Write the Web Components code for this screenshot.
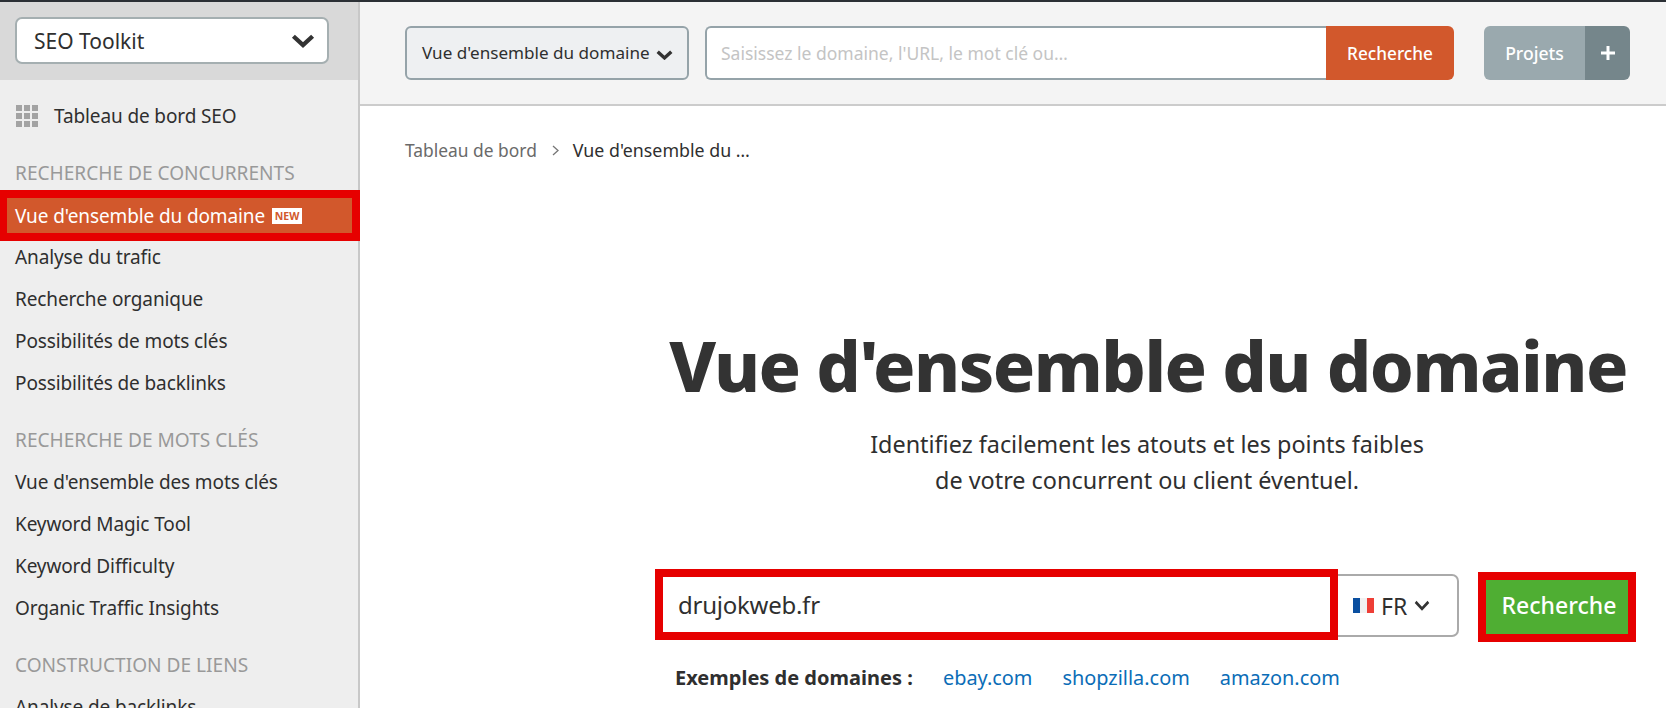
<!DOCTYPE html>
<html lang="fr"><head><meta charset="utf-8"><title>SEO Toolkit</title>
<style>
html,body{margin:0;padding:0;height:708px;overflow:hidden;background:#fff}
body{font-family:"Noto Sans","Open Sans",sans-serif;color:#2f2f2f}
</style></head><body>
<app-shell>
  <seo-sidebar slot="side"></seo-sidebar>
  <top-toolbar slot="top"></top-toolbar>
  <bread-crumbs slot="main"></bread-crumbs>
  <domain-hero slot="main"></domain-hero>
</app-shell>
<script>
const chevron=(w,h,sw,c='#333',mt=0)=>`<svg width="${w}" height="${h}" viewBox="0 0 20 12" preserveAspectRatio="none" style="display:block;flex:none;margin-top:${mt}px"><path d="M2 2 L10 9.5 L18 2" fill="none" stroke="${c}" stroke-width="${sw}"/></svg>`;
function def(name,html){customElements.define(name,class extends HTMLElement{constructor(){super();this.attachShadow({mode:'open'}).innerHTML=html;}})}

def('app-shell',`<style>
:host{display:grid;grid-template-columns:360px 1fr;height:708px;border-top:2px solid #2b3035;box-sizing:border-box;overflow:hidden}
.side{display:block;min-width:0;height:706px;overflow:hidden}
.right{display:flex;flex-direction:column;min-width:0}
</style><div class="side"><slot name="side"></slot></div><div class="right"><slot name="top"></slot><slot name="main"></slot></div>`);

def('seo-sidebar',`<style>
:host{display:block;height:706px;background:#eeeeee;box-sizing:border-box;box-shadow:inset -2px 0 0 #c8c8c8;overflow:hidden}
.head{background:#d9d9d9;height:78px;margin-right:2px;box-sizing:border-box;padding:15px 29px 0 15px}
.sel{height:47px;box-sizing:border-box;background:#fff;border:2px solid #a5afb1;border-radius:7px;display:flex;align-items:center;justify-content:space-between;padding:0 12px 0 17px;font-size:21px;color:#2f2f2f}
.dash{display:flex;align-items:center;height:22px;margin:25px 0 0 16px;gap:16px;font-size:19px;letter-spacing:-.12px}
.grid{display:grid;grid-template-columns:repeat(3,6px);grid-auto-rows:6px;gap:2px;flex:none}
.grid i{background:#a3a3a3}
</style>
<div class="head"><div class="sel"><span>SEO Toolkit</span>${chevron(24,14,3.6)}</div></div>
<div class="dash"><div class="grid"><i></i><i></i><i></i><i></i><i></i><i></i><i></i><i></i><i></i></div><span>Tableau de bord SEO</span></div>
<nav-label style="margin-top:34px">RECHERCHE DE CONCURRENTS</nav-label>
<nav-item active>Vue d'ensemble du domaine<new-badge></new-badge></nav-item>
<nav-item>Analyse du trafic</nav-item>
<nav-item>Recherche organique</nav-item>
<nav-item>Possibilités de mots clés</nav-item>
<nav-item>Possibilités de backlinks</nav-item>
<nav-label style="margin-top:24px">RECHERCHE DE MOTS CLÉS</nav-label>
<nav-item first>Vue d'ensemble des mots clés</nav-item>
<nav-item>Keyword Magic Tool</nav-item>
<nav-item>Keyword Difficulty</nav-item>
<nav-item>Organic Traffic Insights</nav-item>
<nav-label style="margin-top:24px">CONSTRUCTION DE LIENS</nav-label>
<nav-item first>Analyse de backlinks</nav-item>`);

def('nav-label',`<style>:host{display:block;height:24px;line-height:24px;padding-left:15px;font-size:19.1px;color:#999;white-space:nowrap}</style><slot></slot>`);

def('nav-item',`<style>
:host{display:flex;align-items:center;height:42px;box-sizing:border-box;padding-left:15px;font-size:19px;letter-spacing:-.12px;color:#2f2f2f;white-space:nowrap}
:host([active]){height:51px;margin-top:5px;margin-bottom:-5px;padding-left:8px;background:#d2582c;border:solid #e60000;border-width:8px 8px 8px 7px;color:#fff}
:host([first]){margin-top:9px}
</style><slot></slot>`);

def('new-badge',`<style>:host{display:inline-block;margin-left:7px;background:#fff;color:#d2582c;font:700 10.5px/16px "Noto Sans",sans-serif;letter-spacing:0;width:30px;text-align:center;height:16px}</style>NEW`);

def('top-toolbar',`<style>
:host{display:flex;align-items:center;height:102px;box-sizing:content-box;background:#f4f4f4;border-bottom:2px solid #cccccc;padding:0 0 0 45px}
.bar{display:flex;height:54px}
.type{width:284px;box-sizing:border-box;background:#eef0f2;border:2px solid #95a3a9;border-radius:6px;display:flex;align-items:center;padding-left:15px;gap:6px;font-size:17.1px;white-space:nowrap;color:#2f2f2f}
.type span{position:relative;top:-1px}
.input{margin-left:16px;width:621px;box-sizing:border-box;background:#fff;border:2px solid #95a3a9;border-right:0;border-radius:6px 0 0 6px;display:flex;align-items:center;padding-left:14px;font-size:17.5px;color:#c4c4c4;white-space:nowrap}
.go{width:128px;background:#d2582c;color:#fff;border-radius:0 6px 6px 0;display:flex;align-items:center;justify-content:center;font-size:17.2px;font-weight:500}
.proj{margin-left:30px;display:flex;border-radius:6px;overflow:hidden;color:#fff;font-size:17.6px;font-weight:500}
.proj span{width:101px;background:#9aa9ae;display:flex;align-items:center;justify-content:center}
.proj b{width:45px;background:#75868b;display:flex;align-items:center;justify-content:center}
</style>
<div class="bar"><div class="type"><span>Vue d'ensemble du domaine</span>${chevron(17,10,4,'#333',4)}</div>
<div class="input">Saisissez le domaine, l'URL, le mot clé ou…</div><div class="go">Recherche</div>
<div class="proj"><span>Projets</span><b><svg width="14" height="14" viewBox="0 0 14 14"><path d="M7 0V14M0 7H14" stroke="#fff" stroke-width="3"/></svg></b></div></div>`);

def('bread-crumbs',`<style>
:host{display:flex;align-items:center;height:24px;margin:32px 0 0 45px;font-size:17.4px;color:#6a6a6a;white-space:nowrap}
svg{margin:0 14px 0 15px}
b{font-weight:400;color:#2f2f2f;font-size:17.8px}
</style>Tableau de bord<svg width="7" height="11" viewBox="0 0 7 11"><path d="M1 1L6 5.5L1 10" fill="none" stroke="#777" stroke-width="1.3"/></svg><b>Vue d'ensemble du …</b>`);

def('domain-hero',`<style>
:host{display:block}
h1{margin:161px 0 0 0;width:1306px;text-align:right;box-sizing:border-box;padding-right:39px;font-size:70px;letter-spacing:-1.5px;line-height:84px;font-weight:800;color:#333;white-space:nowrap}
p{margin:19px 0 0 0;width:1574px;text-align:center;font-size:23.4px;line-height:36px;color:#2f2f2f}
.row{display:flex;align-items:flex-start;margin:71px 0 0 295px}
.q{width:683px;height:71px;box-sizing:border-box;border:8px solid #e60000;background:#fff;display:flex;align-items:center;padding-left:15px;font-size:24px;letter-spacing:-.25px;color:#2f2f2f}
.fr{width:121px;height:63px;margin-top:5px;box-sizing:border-box;border:2px solid #aaa;border-left:0;border-radius:0 7px 7px 0;display:flex;align-items:center;padding-left:15px;font-size:23px;gap:7px}
.flag{display:flex;width:21px;height:15px;flex:none}
.flag i{flex:1}
.go{margin:3px 0 0 19px;width:158px;height:70px;box-sizing:border-box;border:8px solid #e60000;background:#4fae33;color:#fff;display:flex;align-items:center;justify-content:center;font-size:23px;font-weight:500;padding:0 0 4px 4px}
.ex{display:flex;align-items:center;height:30px;margin:20px 0 0 315px;font-size:20px;white-space:nowrap}
.ex b{font-weight:700;color:#2f2f2f;width:268px}
.ex a{color:#0b6db7;text-decoration:none;font-size:19.9px}
</style>
<h1>Vue d'ensemble du domaine</h1>
<p>Identifiez facilement les atouts et les points faibles<br>de votre concurrent ou client éventuel.</p>
<div class="row"><div class="q">drujokweb.fr</div><div class="fr"><span class="flag"><i style="background:#0a4fa0"></i><i style="background:#f1f1f1"></i><i style="background:#ee3e36"></i></span><span>FR</span>${chevron(16,11,3.2)}</div><div class="go">Recherche</div></div>
<div class="ex"><b>Exemples de domaines :</b><a href="#">ebay.com</a><a href="#" style="margin-left:30px">shopzilla.com</a><a href="#" style="margin-left:30px">amazon.com</a></div>`);
</script>
</body></html>
